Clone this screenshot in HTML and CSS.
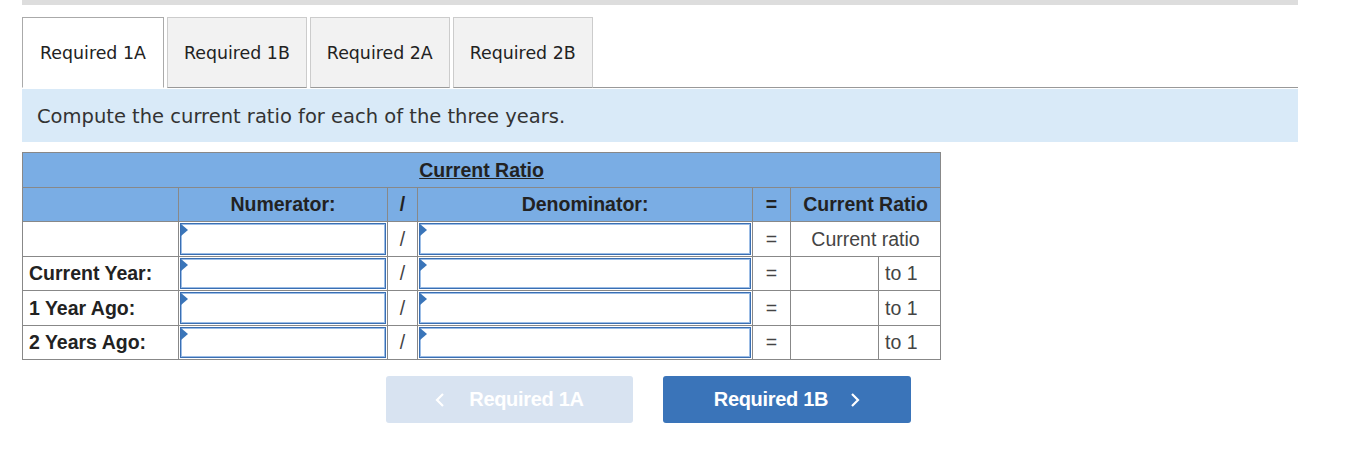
FILE: index.html
```html
<!DOCTYPE html>
<html lang="en">
<head>
    <meta charset="UTF-8">
    <title>Current Ratio</title>
    <link rel="stylesheet" href="styles.css">
</head>
<body>
<div class="page">
    <div class="top-bar"></div>

    <div class="tabs">
        <div class="tab active">Required 1A</div>
        <div class="tab">Required 1B</div>
        <div class="tab">Required 2A</div>
        <div class="tab">Required 2B</div>
        <div class="tab-rest"></div>
    </div>

    <div class="prompt">Compute the current ratio for each of the three years.</div>

    <table class="ratio">
        <colgroup>
            <col class="c-label">
            <col class="c-num">
            <col class="c-op">
            <col class="c-den">
            <col class="c-eq">
            <col class="c-res">
            <col class="c-to">
        </colgroup>
        <tr class="head">
            <th colspan="7"><u>Current Ratio</u></th>
        </tr>
        <tr class="head sub">
            <th></th>
            <th>Numerator:</th>
            <th>/</th>
            <th>Denominator:</th>
            <th>=</th>
            <th colspan="2">Current Ratio</th>
        </tr>
        <tr class="tall">
            <td></td>
            <td class="in"><div class="field"></div></td>
            <td class="op">/</td>
            <td class="in"><div class="field"></div></td>
            <td class="op">=</td>
            <td colspan="2" class="op">Current ratio</td>
        </tr>
        <tr>
            <td class="label">Current Year:</td>
            <td class="in"><div class="field"></div></td>
            <td class="op">/</td>
            <td class="in"><div class="field"></div></td>
            <td class="op">=</td>
            <td></td>
            <td class="to">to 1</td>
        </tr>
        <tr class="tall">
            <td class="label">1 Year Ago:</td>
            <td class="in"><div class="field"></div></td>
            <td class="op">/</td>
            <td class="in"><div class="field"></div></td>
            <td class="op">=</td>
            <td></td>
            <td class="to">to 1</td>
        </tr>
        <tr>
            <td class="label">2 Years Ago:</td>
            <td class="in"><div class="field"></div></td>
            <td class="op">/</td>
            <td class="in"><div class="field"></div></td>
            <td class="op">=</td>
            <td></td>
            <td class="to">to 1</td>
        </tr>
    </table>

    <div class="nav">
        <div class="nav-btn prev">
            <svg width="10" height="16" viewBox="0 0 10 16"><path d="M8 2 L2 8 L8 14" fill="none" stroke="#fff" stroke-width="2.2"/></svg>
            <span>Required 1A</span>
        </div>
        <div class="nav-btn next">
            <span>Required 1B</span>
            <svg width="10" height="16" viewBox="0 0 10 16"><path d="M2 2 L8 8 L2 14" fill="none" stroke="#fff" stroke-width="2.2"/></svg>
        </div>
    </div>
</div>
</body>
</html>
```

FILE: styles.css
```css
*{
    margin: 0;
    padding: 0;
    box-sizing: border-box;
}
body{
    background: #fff;
    font-family: "DejaVu Sans", Verdana, sans-serif;
    color: #222;
}
.page{
    margin-left: 22px;
    width: 1276px;
}
.top-bar{
    height: 5px;
    background-color: #dddddd;
}
.tabs{
    display: flex;
    gap: 3px;
    margin-top: 12px;
    height: 71px;
}
.tab{
    height: 71px;
    padding: 0 16px;
    line-height: 70px;
    font-size: 17.4px;
    color: #222;
    background-color: #f2f2f2;
    border: 1px solid #cccccc;
    border-bottom: 1px solid #999;
}
.tab.active{
    background-color: #fff;
    border-color: #aaaaaa;
    border-bottom-color: #fff;
    padding: 0 17px;
}
.tab-rest{
    flex: 1;
    margin-left: -3px;
    border-bottom: 1px solid #999;
}
.prompt{
    margin-top: 1px;
    height: 53px;
    line-height: 56px;
    padding-left: 15px;
    background-color: #d9eaf8;
    font-size: 19.5px;
    color: #333;
}
.ratio{
    margin-top: 10px;
    width: 918px;
    border-collapse: collapse;
    font-family: "Liberation Sans", Arial, sans-serif;
    font-size: 19.5px;
    color: #222;
    table-layout: fixed;
}
.c-label{ width: 156px; }
.c-num{ width: 209px; }
.c-op{ width: 30px; }
.c-den{ width: 335px; }
.c-eq{ width: 38px; }
.c-res{ width: 88px; }
.c-to{ width: 62px; }
.ratio th,
.ratio td{
    border: 1px solid #888;
    height: 34px;
    padding: 0;
}
.ratio tr.tall td{
    height: 35px;
}
.ratio tr.head th{
    background-color: #7aade4;
    font-weight: bold;
    text-align: center;
    height: 35px;
}
.ratio tr.head.sub th{
    height: 34px;
}
.ratio td.label{
    font-weight: bold;
    padding-left: 6px;
}
.ratio td.op{
    text-align: center;
    color: #444;
}
.ratio td.to{
    padding-left: 6px;
    color: #444;
}
.ratio td.in{
    padding: 1px;
}
.field{
    position: relative;
    height: 100%;
    min-height: 31px;
    border: 1px solid #3a6fb3;
    box-shadow: inset 0 0 0 1px #9cbde6;
    background: #fff;
}
.field::before{
    content: "";
    position: absolute;
    left: 0;
    top: 0;
    border-top: 6px solid transparent;
    border-bottom: 6px solid transparent;
    border-left: 7px solid #3a75b9;
}
.nav{
    display: flex;
    gap: 30px;
    margin-top: 16px;
    margin-left: 364px;
}
.nav-btn{
    display: flex;
    align-items: center;
    justify-content: center;
    width: 247px;
    height: 47px;
    border-radius: 3px;
    color: #fff;
    font-family: "Liberation Sans", Arial, sans-serif;
    font-weight: bold;
    font-size: 20px;
    letter-spacing: -0.3px;
}
.nav-btn.prev{
    background-color: #d8e3f1;
    gap: 24px;
}
.nav-btn.next{
    background-color: #3a74b9;
    width: 248px;
    gap: 22px;
}
```
